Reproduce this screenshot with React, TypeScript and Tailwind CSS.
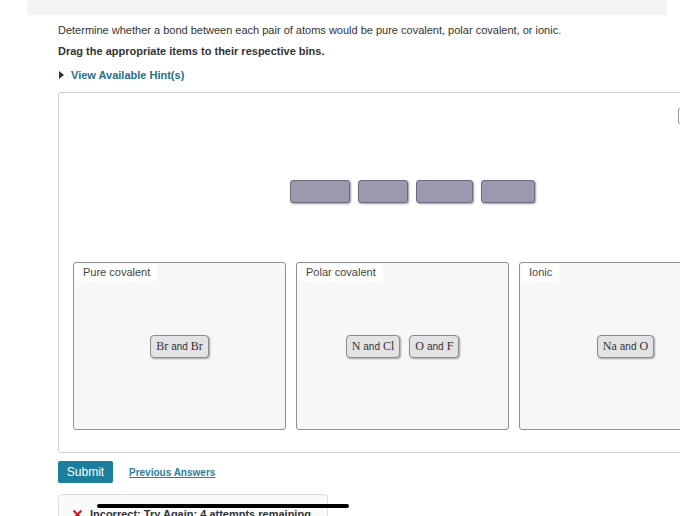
import { X } from 'lucide-react';

type Chip = { a: string; b: string };

const BINS: { label: string; chips: Chip[] }[] = [
  { label: 'Pure covalent', chips: [{ a: 'Br', b: 'Br' }] },
  { label: 'Polar covalent', chips: [{ a: 'N', b: 'Cl' }, { a: 'O', b: 'F' }] },
  { label: 'Ionic', chips: [{ a: 'Na', b: 'O' }] },
];

const EMPTY_SLOTS = [60, 50, 57, 54];

function ChipItem({ chip }: { chip: Chip }) {
  return (
    <div className="h-[23px] px-[5px] flex items-center gap-[3px] bg-[#e3e3e6] border border-[#8c8c8c] rounded-[4px] shadow-[1px_1px_2px_rgba(0,0,0,0.35)] text-[#333]">
      <span className="font-['Liberation_Serif',serif] text-[12px]">{chip.a}</span>
      <span className="font-['Liberation_Sans',sans-serif] text-[10px]">and</span>
      <span className="font-['Liberation_Serif',serif] text-[12px]">{chip.b}</span>
    </div>
  );
}

export default function App() {
  return (
    <div className="w-[700px] h-[516px] bg-white overflow-hidden font-['Liberation_Sans',Arial,sans-serif] text-[#333]">
      {/* top strip */}
      <div className="ml-[27px] w-[640px] h-[15px] bg-[#f3f3f4]" />

      <div className="w-[680px] overflow-hidden pl-[58px]">
        <p className="mt-[8px] h-[14px] leading-[14px] text-[11px]">
          Determine whether a bond between each pair of atoms would be pure covalent, polar covalent, or ionic.
        </p>
        <p className="mt-[7px] h-[14px] leading-[14px] text-[11px] font-bold">
          Drag the appropriate items to their respective bins.
        </p>
        <div className="mt-[10px] h-[14px] flex items-center gap-[7px] text-[11px] font-bold text-[#1d6f8c]">
          <svg width="5" height="8" viewBox="0 0 5 8" className="ml-[1px]">
            <path d="M0 0 L5 4 L0 8 Z" fill="#2b3440" />
          </svg>
          <span>View Available Hint(s)</span>
        </div>

        {/* drag area */}
        <div className="relative mt-[10px] w-[680px] h-[361px] border border-[#cfcfd2] rounded-[3px]">
          <div className="absolute left-[619px] top-[15px] w-[10px] h-[16px] border border-[#999] rounded-[2px] bg-white" />

          <div className="mt-[87px] ml-[231px] flex gap-[8px]">
            {EMPTY_SLOTS.map((w, i) => (
              <div
                key={i}
                className="h-[23px] bg-[#9b99ad] border border-[#6e6c80] rounded-[3px] shadow-[1px_1px_2px_rgba(0,0,0,0.4)]"
                style={{ width: w }}
              />
            ))}
          </div>

          <div className="mt-[59px] ml-[14px] flex gap-[10px]">
            {BINS.map((bin) => (
              <div
                key={bin.label}
                className="relative shrink-0 w-[213px] h-[168px] bg-[#f7f7f8] border border-[#8f8f94] rounded-[3px] flex items-center justify-center gap-[9px]"
              >
                <div className="absolute left-[1px] top-[1px] bg-white pl-[8px] pr-[7px] h-[17px] leading-[17px] text-[11px] text-[#444]">
                  {bin.label}
                </div>
                {bin.chips.map((c) => (
                  <ChipItem key={c.a + c.b} chip={c} />
                ))}
              </div>
            ))}
          </div>
        </div>

        <div className="mt-[8px] flex items-center gap-[16px]">
          <button className="w-[55px] h-[22px] bg-[#1b7e9d] text-white text-[12px] rounded-[2px]">Submit</button>
          <span className="text-[10px] font-bold text-[#2a7fa3] underline">Previous Answers</span>
        </div>

        <div className="relative mt-[11px] w-[270px] h-[40px] border border-[#dcdcdc] rounded-[4px] bg-[#fafafa] flex items-start gap-[6px] pl-[12px] pt-[12px]">
          <X size={13} strokeWidth={4} color="#c8202a" className="mt-[1px]" />
          <span className="text-[11px] font-bold text-[#333] leading-[14px]">Incorrect; Try Again; 4 attempts remaining</span>
          <div className="absolute left-[38px] top-[9px] w-[252px] h-[4px] bg-black rounded-full" />
        </div>
      </div>
    </div>
  );
}
